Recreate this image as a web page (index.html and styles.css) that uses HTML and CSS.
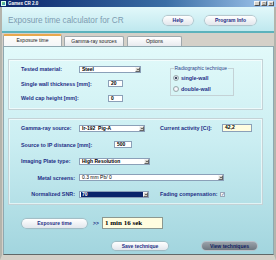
FILE: index.html
```html
<!DOCTYPE html>
<html lang="en">
  <head>
    <meta charset="UTF-8" />
    <meta name="viewport" content="width=device-width, initial-scale=1.0" />
    <title>Gamex CR 2.0</title>
    <link rel="stylesheet" href="styles.css">
  </head>
  <body>
    <div class="window">
      <div class="titlebar">
        <span class="app-icon"></span>
        <span class="app-name">Gamex CR 2.0</span>
        <div class="win-controls">
          <span class="ctl">_</span><span class="ctl">&#9633;</span><span class="ctl">&#215;</span>
        </div>
      </div>

      <div class="header">
        <h1>Exposure time calculator for CR</h1>
        <button class="pill help">Help</button>
        <button class="pill info">Program Info</button>
      </div>

      <div class="tabs">
        <div class="tab active">Exposure time</div>
        <div class="tab t-gamma">Gamma-ray sources</div>
        <div class="tab t-options">Options</div>
      </div>

      <div class="page">
        <div class="panel top-panel">
          <div class="fields">
            <label class="f-material">Tested material:</label>
            <div class="select s-material"><span>Steel</span><i></i></div>
            <label class="f-long">Single wall thickness [mm]:</label>
            <div class="input i-small">20</div>
            <label class="f-long">Weld cap height [mm]:</label>
            <div class="input i-small">0</div>
          </div>
          <fieldset class="technique">
            <legend>Radiographic technique</legend>
            <div class="radio checked">single-wall</div>
            <div class="radio">double-wall</div>
          </fieldset>
        </div>

        <div class="panel source-panel">
          <div class="row">
            <label class="l-58">Gamma-ray source:</label>
            <div class="select s-source"><span>Ir-192&nbsp; Pig-A</span><i></i></div>
            <label class="l-activity">Current activity [Ci]:</label>
            <div class="input yellow i-activity">42,2</div>
          </div>
          <div class="row">
            <label class="l-93">Source to IP distance [mm]:</label>
            <div class="input i-distance">500</div>
          </div>
          <div class="row">
            <label class="l-58">Imaging Plate type:</label>
            <div class="select s-plate"><span>High Resolution</span><i></i></div>
          </div>
          <div class="row">
            <label class="l-right">Metal screens:</label>
            <div class="select s-screens"><span>0.3 mm Pb/ 0</span><i></i></div>
          </div>
          <div class="row">
            <label class="l-right">Normalized SNR:</label>
            <div class="select selected s-snr"><span>70</span><i></i></div>
            <label class="l-fading">Fading compensation:</label>
            <span class="check">&#10003;</span>
          </div>
        </div>

        <div class="result-row">
          <button class="pill calc">Exposure time</button>
          <span class="arrows">&gt;&gt;</span>
          <div class="result">1 min 16 sek</div>
        </div>

        <div class="actions">
          <button class="pill save">Save technique</button>
          <button class="pill dark view">View techniques</button>
        </div>
      </div>
    </div>
  </body>
</html>
```

FILE: styles.css
```css
* {
  margin: 0;
  padding: 0;
  box-sizing: border-box;
  font-family: "Liberation Sans", Arial, sans-serif;
}

body {
  width: 276px;
  height: 260px;
  overflow: hidden;
  background: #d4d0c8;
}

.window {
  height: 260px;
  display: flex;
  flex-direction: column;
  border-left: 2px solid #b4b4ac;
  border-right: 2px solid #b4b4ac;
  border-bottom: 5px solid #d4d0c8;
}

/* title bar */
.titlebar {
  height: 7px;
  margin: 0 -2px;
  display: flex;
  align-items: center;
  background: linear-gradient(to right, #0a246a, #3a6ea5 60%, #a6caf0);
  padding: 0 2px 0 1px;
}

.app-icon {
  width: 5px;
  height: 5px;
  background: linear-gradient(135deg, #7bd36a, #2e8bd0);
  border: 1px solid #dfe;
}

.app-name {
  color: white;
  font-size: 4.5px;
  font-weight: bold;
  margin-left: 2px;
}

.win-controls {
  margin-left: auto;
  display: flex;
  gap: 1px;
}

.ctl {
  width: 6px;
  height: 5px;
  background: #d4d0c8;
  border: 1px solid #f4f4f4;
  border-right-color: #555;
  border-bottom-color: #555;
  font-size: 4px;
  line-height: 3px;
  text-align: center;
  color: #000;
}

/* header */
.header {
  height: 26px;
  display: flex;
  align-items: center;
  padding: 2px 0 0 6px;
  background: linear-gradient(#e2f8fa, #bfe8ee);
  border-bottom: 2px solid #5cb2bc;
}

.header h1 {
  font-weight: normal;
  font-size: 8.2px;
  color: #7d9bb1;
  width: 155px;
}

.pill {
  height: 9px;
  border: none;
  border-radius: 5px;
  background: linear-gradient(#ffffff, #e2e6ec);
  box-shadow: 0 0 1px 0.5px #98a0a8;
  color: #1f2f86;
  font-size: 5px;
  font-weight: bold;
}

.help {
  width: 30px;
}

.info {
  width: 51px;
  margin-left: 12px;
}

/* tabs */
.tabs {
  height: 13px;
  display: flex;
  align-items: flex-end;
  padding-left: 1px;
  background: #d4d0c8;
}

.tab {
  height: 10px;
  border: 1px solid #a0a8ac;
  border-bottom: none;
  border-radius: 2px 2px 0 0;
  background: linear-gradient(#ffffff, #e8eaee);
  font-size: 5px;
  line-height: 8px;
  text-align: center;
  color: #202020;
}

.tab.active {
  width: 59px;
  height: 12px;
  border-top: 2px solid #e8a84c;
  background: linear-gradient(#fffdf8, #f4f6f8);
  line-height: 9px;
}

.t-gamma {
  width: 60px;
  margin-left: 2px;
}

.t-options {
  width: 55px;
  margin-left: 3px;
}

/* tab page */
.page {
  flex: 1;
  margin-left: 1px;
  border: 1px solid #8ea8b0;
  border-bottom-color: #606868;
  background: linear-gradient(#e2fafa, #cbeef2 45%, #a2d5de);
  padding: 12px 0 0 4px;
}

.panel {
  width: 255px;
  border: 1px solid #c4d2d6;
  box-shadow: inset 0 0 0 1px rgba(255, 255, 255, 0.6);
}

label {
  font-size: 5.4px;
  font-weight: bold;
  color: #1f2f86;
  white-space: nowrap;
}

.select,
.input {
  height: 7px;
  background: white;
  border: 1px solid #8ba0b8;
  font-size: 5px;
  line-height: 5px;
  color: #000;
  padding-left: 2px;
  white-space: nowrap;
}

.select {
  display: flex;
  align-items: center;
  font-weight: bold;
  padding-right: 0;
}

.select span {
  flex: 1;
}

.select i {
  width: 5px;
  height: 5px;
  background: #d4d0c8;
  border: 1px solid #f4f4f4;
  border-right-color: #666;
  border-bottom-color: #666;
  position: relative;
}

.select i::after {
  content: "";
  position: absolute;
  left: 0.5px;
  top: 1px;
  border-left: 1px solid transparent;
  border-right: 1px solid transparent;
  border-top: 1.5px solid #000;
}

.input {
  font-weight: bold;
}

.yellow {
  background: #fffde0;
}

/* first panel */
.top-panel {
  height: 51px;
  display: flex;
  align-items: flex-start;
  padding: 5px 0 0 12px;
}

.fields {
  display: grid;
  grid-template-columns: 58px 29px 33px;
  grid-auto-rows: 8px;
  row-gap: 6.5px;
  align-items: center;
}

.f-material {
  grid-column: 1;
}

.s-material {
  grid-column: 2 / 4;
  width: 62px;
}

.f-long {
  grid-column: 1 / 3;
}

.i-small {
  grid-column: 3;
  width: 15px;
  height: 7px;
}

.technique {
  width: 64px;
  height: 31px;
  margin-left: 29px;
  border: 1px solid #c4d2d6;
  padding: 4px 0 0 2px;
}

.technique legend {
  font-size: 5px;
  color: #2d3d8a;
  padding: 0 0.5px;
  margin-left: 1px;
}

.radio {
  display: flex;
  align-items: center;
  gap: 2px;
  font-size: 5.4px;
  font-weight: bold;
  color: #1f2f86;
  height: 6px;
  margin-bottom: 5px;
}

.radio::before {
  content: "";
  width: 4px;
  height: 4px;
  border-radius: 50%;
  border: 0.5px solid #9aa;
  background: radial-gradient(#ffffff, #dde);
}

.radio.checked::before {
  background: radial-gradient(#405060 35%, #dde 45%);
}

/* second panel */
.source-panel {
  height: 87px;
  margin-top: 8px;
  padding: 4.5px 0 0 12px;
  display: flex;
  flex-direction: column;
  gap: 7.5px;
}

.row {
  height: 9px;
  display: flex;
  align-items: center;
}

.l-58 {
  width: 58px;
}

.l-93 {
  width: 93px;
}

.l-right {
  width: 54px;
  margin-right: 4px;
  text-align: right;
}

.s-source {
  width: 66px;
}

.l-activity {
  width: 62px;
  margin-left: 15px;
}

.i-activity {
  width: 30px;
  height: 8px;
}

.i-distance {
  width: 18px;
}

.s-plate {
  width: 71px;
}

.s-screens {
  width: 145px;
  font-weight: normal;
}

.s-snr {
  width: 70px;
}

.select.selected span {
  background: #0a246a;
  color: white;
  height: 5px;
  margin-left: -1px;
  padding-left: 1px;
}

.l-fading {
  width: 60px;
  margin-left: 11px;
}

.check {
  width: 5px;
  height: 5px;
  border: 0.5px solid #98a8b8;
  background: #f4f8fa;
  font-size: 4.5px;
  line-height: 4px;
  text-align: center;
  color: #5a6a90;
}

/* result and actions */
.result-row {
  height: 12px;
  margin-top: 12px;
  display: flex;
  align-items: center;
  padding-left: 14px;
}

.calc {
  width: 65px;
}

.arrows {
  width: 15px;
  padding-left: 6px;
  font-size: 5px;
  font-weight: bold;
  color: #1f2f86;
}

.result {
  width: 61px;
  height: 12px;
  background: #fffde0;
  border: 1px solid #8c9890;
  font-family: "Liberation Serif", "Times New Roman", serif;
  font-weight: bold;
  font-size: 7px;
  line-height: 10px;
  padding-left: 2px;
}

.actions {
  height: 8px;
  margin-top: 13px;
  display: flex;
  padding-left: 104px;
}

.actions .pill {
  height: 8px;
}

.save {
  width: 56px;
}

.view {
  width: 55px;
  margin-left: 34px;
}

.pill.dark {
  background: linear-gradient(#9aa2aa, #6e7880);
  box-shadow: 0 0 0 1px #b8c0c8;
  color: #101c60;
}
```
